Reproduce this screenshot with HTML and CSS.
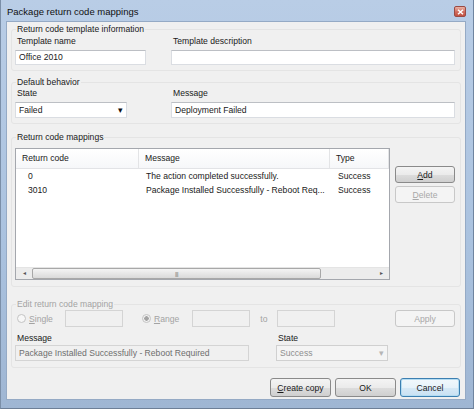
FILE: index.html
```html
<!DOCTYPE html>
<html lang="en">
<head>
    <meta charset="UTF-8">
    <title>Package return code mappings</title>
    <link rel="stylesheet" href="styles.css">
</head>
<body>
<div class="window">
    <div class="titlebar">
        <span class="title">Package return code mappings</span>
        <span class="close-btn">
            <svg width="7" height="6" viewBox="0 0 7 6"><path d="M1 0.8 L6 5.2 M6 0.8 L1 5.2" stroke="#fff" stroke-width="1.5"/></svg>
        </span>
    </div>

    <div class="client">
        <!-- template info -->
        <div class="group group-template">
            <div class="caption">Return code template information</div>
            <div class="two-col">
                <div class="field">
                    <div class="label">Template name</div>
                    <div class="textbox name-box">Office 2010</div>
                </div>
                <div class="field">
                    <div class="label">Template description</div>
                    <div class="textbox"></div>
                </div>
            </div>
        </div>

        <!-- default behavior -->
        <div class="group group-default">
            <div class="caption">Default behavior</div>
            <div class="two-col">
                <div class="field">
                    <div class="label">State</div>
                    <div class="combo"><span>Failed</span><span class="arrow">&#9662;</span></div>
                </div>
                <div class="field">
                    <div class="label">Message</div>
                    <div class="textbox tall">Deployment Failed</div>
                </div>
            </div>
        </div>

        <!-- mappings list -->
        <div class="group group-mappings">
            <div class="caption">Return code mappings</div>
            <div class="list-row">
                <div class="listview">
                    <div class="lv-header">
                        <div class="col col-code">Return code</div>
                        <div class="col col-msg">Message</div>
                        <div class="col col-type">Type</div>
                    </div>
                    <div class="lv-body">
                        <div class="lv-item">
                            <div class="col col-code"><span class="code">0</span></div>
                            <div class="col col-msg">The action completed successfully.</div>
                            <div class="col col-type">Success</div>
                        </div>
                        <div class="lv-item">
                            <div class="col col-code"><span class="code">3010</span></div>
                            <div class="col col-msg">Package Installed Successfully - Reboot Req...</div>
                            <div class="col col-type">Success</div>
                        </div>
                    </div>
                    <div class="hscroll">
                        <div class="sb-btn">&#9666;</div>
                        <div class="sb-thumb"><span class="grip">|||</span></div>
                        <div class="sb-track"></div>
                        <div class="sb-btn">&#9656;</div>
                    </div>
                </div>
                <div class="side-buttons">
                    <button class="btn"><u>A</u>dd</button>
                    <button class="btn disabled"><u>D</u>elete</button>
                </div>
            </div>
        </div>

        <!-- edit mapping (disabled) -->
        <div class="group group-edit">
            <div class="caption disabled-text">Edit return code mapping</div>
            <div class="edit-row">
                <span class="radio"></span>
                <span class="radio-label disabled-text"><u>S</u>ingle</span>
                <div class="textbox small off single-box"></div>
                <span class="radio checked"></span>
                <span class="radio-label disabled-text"><u>R</u>ange</span>
                <div class="textbox small off range-box"></div>
                <span class="to-label disabled-text">to</span>
                <div class="textbox small off"></div>
                <button class="btn disabled apply-btn">Apply</button>
            </div>
            <div class="msg-row">
                <div class="field">
                    <div class="label">Message</div>
                    <div class="textbox tall off msg-box">Package Installed Successfully - Reboot Required</div>
                </div>
                <div class="field">
                    <div class="label">State</div>
                    <div class="combo off"><span>Success</span><span class="arrow">&#9662;</span></div>
                </div>
            </div>
        </div>

        <div class="dialog-buttons">
            <button class="btn wide"><u>C</u>reate copy</button>
            <button class="btn wide">OK</button>
            <button class="btn focused">Cancel</button>
        </div>
    </div>
</div>
</body>
</html>
```

FILE: styles.css
```css
* {
    box-sizing: border-box;
}

body {
    margin: 0;
    font-family: "Liberation Sans", Arial, sans-serif;
    font-size: 8.6px;
    color: #1a1a1a;
    background: #9fb4cf;
}

.window {
    width: 474px;
    height: 409px;
    display: flex;
    flex-direction: column;
    background: linear-gradient(to bottom, #b9cde6, #aac2df 60%, #9fb6d3);
    border-left: 1px solid #7b8fa8;
    border-right: 1px solid #6f849f;
    border-bottom: 1px solid #6d7f97;
}

.titlebar {
    height: 21px;
    display: flex;
    align-items: flex-start;
    padding-left: 6px;
}

.title {
    font-size: 9.5px;
    margin-top: 6px;
    color: #111;
}

.close-btn {
    margin-left: auto;
    margin-right: 7px;
    margin-top: 6px;
    width: 12px;
    height: 11px;
    border-radius: 2px;
    border: 1px solid #9a4a44;
    background: linear-gradient(to bottom, #eab3a6, #d06a5c 55%, #c25242);
    display: flex;
    align-items: center;
    justify-content: center;
}

.client {
    margin: 0 7px 8px 5px;
    height: 379px;
    background: #f0f0f0;
    border: 1px solid #95aac5;
    padding: 0 4px 0 4px;
}

/* group boxes */
.group {
    border: 1px solid #e4e4e4;
    border-radius: 3px;
    padding: 0 5px 5px 3px;
}

.caption {
    width: fit-content;
    margin-top: -6px;
    margin-left: 1px;
    padding: 0 1px;
    line-height: 11px;
    background: #f0f0f0;
}

.label {
    line-height: 11px;
    padding-left: 2px;
}

.disabled-text {
    color: #a3a3a3;
}

.group-template {
    margin-top: 7px;
}

.group-template .label {
    margin-top: 1px;
}

.group-template .textbox {
    margin-top: 3px;
}

.group-default {
    margin-top: 11px;
}

.group-default .combo,
.group-default .textbox {
    margin-top: 3px;
}

.group-mappings {
    margin-top: 13px;
    padding-bottom: 6px;
}

.group-edit {
    margin-top: 17px;
    padding-bottom: 6px;
}

.two-col {
    display: grid;
    grid-template-columns: 156px 1fr;
}

/* inputs */
.textbox {
    height: 15px;
    line-height: 13px;
    padding-left: 3px;
    background: #fff;
    border: 1px solid #dadde2;
    border-top-color: #bcbfc4;
    white-space: nowrap;
    overflow: hidden;
}

.textbox.tall {
    height: 16px;
    line-height: 14px;
}

.name-box {
    width: 131px;
}

.textbox.off {
    background: #f0f0f0;
    border-color: #d4d4d4;
    color: #6e6e6e;
}

.combo {
    width: 112px;
    height: 16px;
    display: flex;
    align-items: center;
    justify-content: space-between;
    padding: 0 3px 0 3px;
    background: #fff;
    border: 1px solid #dadde2;
    border-top-color: #bcbfc4;
}

.combo .arrow {
    font-size: 9px;
    color: #111;
}

.combo.off {
    background: #f4f4f4;
    border-color: #d0d0d0;
    color: #8e8e8e;
}

.combo.off .arrow {
    color: #b5b5b5;
}

/* list view */
.list-row {
    display: flex;
    gap: 5px;
    margin-top: 5px;
}

.listview {
    width: 376px;
    height: 132px;
    background: #fff;
    border: 1px solid #a4a7ad;
    display: flex;
    flex-direction: column;
}

.lv-header {
    height: 20px;
    display: flex;
    background: linear-gradient(to bottom, #ffffff, #f6f7f9);
    border-bottom: 1px solid #e2e3e6;
}

.lv-header .col {
    line-height: 19px;
    border-right: 1px solid #e3e4e6;
}

.col {
    white-space: nowrap;
    overflow: hidden;
    padding-left: 6px;
}

.col-code {
    width: 123px;
}

.col-msg {
    width: 191px;
}

.col-type {
    flex: 1;
}

.lv-body {
    flex: 1;
}

.lv-item {
    display: flex;
    height: 14px;
    line-height: 14px;
}

.lv-item .col-code {
    padding-left: 12px;
}

.lv-item .col-msg {
    padding-left: 7px;
}

.lv-item .col-type {
    padding-left: 8px;
}

.hscroll {
    height: 12px;
    display: flex;
    background: #ececec;
    border-top: 1px solid #e4e4e4;
}

.sb-btn {
    width: 16px;
    font-size: 6px;
    line-height: 11px;
    text-align: center;
    color: #555;
}

.sb-thumb {
    width: 289px;
    border: 1px solid #a8a8a8;
    border-radius: 2px;
    background: linear-gradient(to bottom, #f4f4f4, #dadada);
    text-align: center;
    line-height: 9px;
}

.grip {
    font-size: 6px;
    color: #777;
    letter-spacing: -0.5px;
}

.sb-track {
    flex: 1;
}

.side-buttons {
    display: flex;
    flex-direction: column;
    gap: 3px;
    padding-top: 18px;
}

/* buttons */
.btn {
    width: 60px;
    height: 17px;
    padding: 0;
    font-family: inherit;
    font-size: 8.6px;
    color: #1a1a1a;
    border: 1px solid #8a8a8a;
    border-radius: 3px;
    background: linear-gradient(to bottom, #f4f4f4, #ebebeb 50%, #dddddd 51%, #cfcfcf);
}

.btn.disabled {
    color: #a8a8a8;
    border-color: #c8c8c8;
    background: #f4f4f4;
}

.btn.wide {
    width: 61px;
}

.btn.focused {
    border-color: #3c7fb1;
    box-shadow: inset 0 0 0 1px #b4dcf2;
    background: linear-gradient(to bottom, #f2f8fc, #e7f2fa 50%, #d7e9f6 51%, #c9e1f3);
}

/* edit mapping */
.edit-row {
    display: flex;
    align-items: center;
    height: 17px;
}

.radio {
    width: 9px;
    height: 9px;
    border-radius: 50%;
    border: 1px solid #c4c4c4;
    background: #f7f7f7;
    margin-left: 2px;
}

.radio.checked {
    margin-left: 19px;
    background: radial-gradient(circle, #a4a4a4 0 2px, #f2f2f2 2.5px);
}

.radio-label {
    margin-left: 3px;
}

.textbox.small {
    width: 58px;
    height: 17px;
}

.single-box {
    margin-left: 12px;
}

.range-box {
    margin-left: 13px;
}

.to-label {
    margin: 0 10px 0 10px;
}

.apply-btn {
    margin-left: auto;
    height: 17px;
}

.msg-row {
    display: grid;
    grid-template-columns: 261px 1fr;
    margin-top: 6px;
}

.msg-row .textbox,
.msg-row .combo {
    margin-top: 1px;
}

.msg-box {
    width: 234px;
}

.dialog-buttons {
    display: flex;
    justify-content: flex-end;
    gap: 4px;
    margin-top: 10px;
    padding-right: 1px;
}

.dialog-buttons .btn {
    height: 19px;
}
```
